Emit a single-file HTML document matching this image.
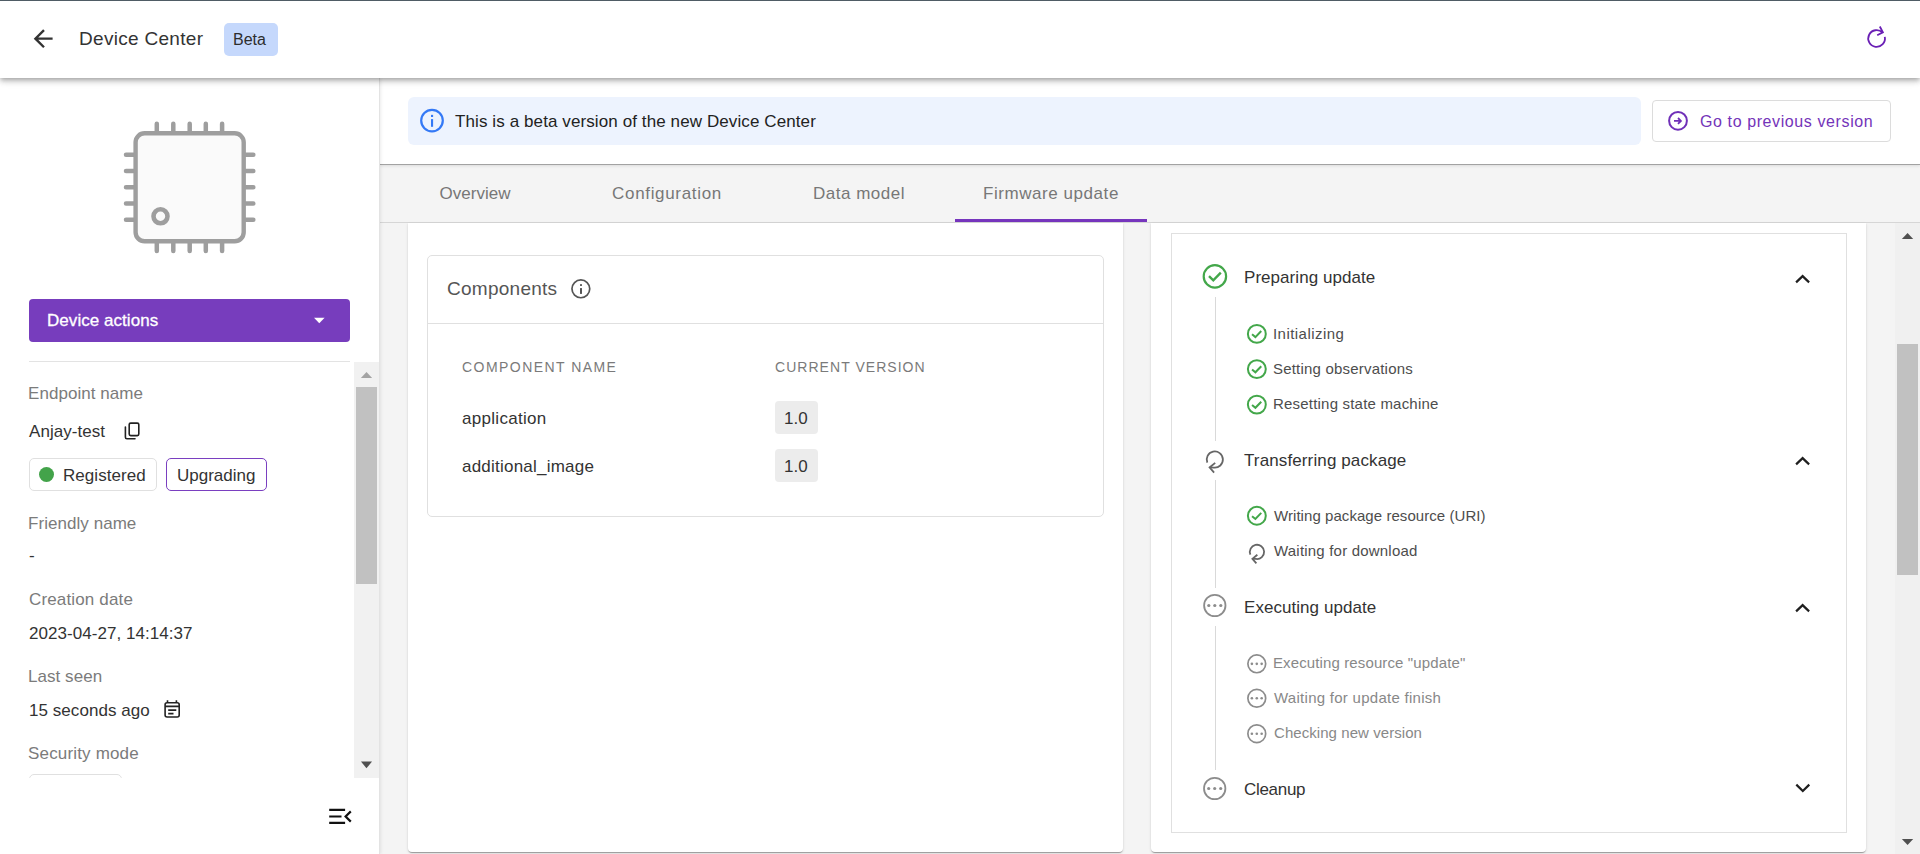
<!DOCTYPE html>
<html><head><meta charset="utf-8">
<style>
*{box-sizing:border-box;margin:0;padding:0}
html,body{width:1920px;height:854px;overflow:hidden;background:#f4f4f4;font-family:"Liberation Sans",sans-serif;color:#333}
.a{position:absolute}
.t{position:absolute;white-space:nowrap;line-height:1}
svg.a{overflow:visible}
.lbl{font-size:17px;color:#7b7b7b}
.val{font-size:17px;color:#333}
.tab{font-size:17px;color:#777;letter-spacing:0.3px}
.ttl{font-size:17px;color:#333;letter-spacing:0.05px}
.sub{font-size:15px;color:#4d4d4d;letter-spacing:0.2px}
.subp{font-size:15px;color:#888;letter-spacing:0.2px}
</style></head>
<body>

<!-- MAIN BG PIECES -->
<div class="a" style="left:380px;top:78px;width:1540px;height:87px;background:#fff;border-bottom:1px solid #a2a2a2;box-shadow:0 1px 3px rgba(0,0,0,.10)"></div>

<!-- banner -->
<div class="a" style="left:408px;top:97px;width:1233px;height:48px;background:#edf3fe;border-radius:6px"></div>
<div class="t" style="left:455px;top:113px;font-size:17px;color:#222;letter-spacing:0.1px">This is a beta version of the new Device Center</div>

<!-- go to previous -->
<div class="a" style="left:1652px;top:100px;width:239px;height:42px;background:#fff;border:1px solid #dcdcdc;border-radius:4px"></div>
<div class="t" style="left:1700px;top:114px;font-size:16px;color:#7434b9;letter-spacing:0.6px">Go to previous version</div>

<!-- tabs -->
<div class="t tab" style="left:379px;width:192px;text-align:center;top:185px;letter-spacing:0.02px">Overview</div>
<div class="t tab" style="left:571px;width:192px;text-align:center;top:185px;letter-spacing:0.67px">Configuration</div>
<div class="t tab" style="left:763px;width:192px;text-align:center;top:185px;letter-spacing:0.52px">Data model</div>
<div class="t tab" style="left:955px;width:192px;text-align:center;top:185px;letter-spacing:0.55px">Firmware update</div>
<div class="a" style="left:380px;top:222px;width:1540px;height:1px;background:#d6d6d6"></div>
<div class="a" style="left:955px;top:219px;width:192px;height:3px;background:#7635bd"></div>

<!-- left card -->
<div class="a" style="left:408px;top:223px;width:715px;height:629px;background:#fff;border-radius:0 0 4px 4px;box-shadow:0px 2px 1px -1px rgba(0,0,0,0.2),0px 1px 1px 0px rgba(0,0,0,0.14),0px 1px 3px 0px rgba(0,0,0,0.12)"></div>
<div class="a" style="left:427px;top:255px;width:677px;height:262px;border:1px solid #e0e0e0;border-radius:5px"></div>
<div class="a" style="left:428px;top:323px;width:675px;height:1px;background:#e0e0e0"></div>
<div class="t" style="left:447px;top:279px;font-size:19px;color:#555;letter-spacing:0.26px">Components</div>
<div class="t" style="left:462px;top:360px;font-size:14px;color:#7a7a7a;letter-spacing:1.45px">COMPONENT NAME</div>
<div class="t" style="left:775px;top:360px;font-size:14px;color:#7a7a7a;letter-spacing:1.04px">CURRENT VERSION</div>
<div class="t val" style="left:462px;top:410px;letter-spacing:0.3px">application</div>
<div class="t val" style="left:462px;top:458px;letter-spacing:0.22px">additional_image</div>
<div class="a" style="left:775px;top:401px;width:43px;height:33px;background:#ececec;border-radius:4px"></div>
<div class="a" style="left:775px;top:449px;width:43px;height:33px;background:#ececec;border-radius:4px"></div>
<div class="t val" style="left:784px;top:410px">1.0</div>
<div class="t val" style="left:784px;top:458px">1.0</div>

<!-- right card -->
<div class="a" style="left:1151px;top:223px;width:715px;height:629px;background:#fff;border-radius:0 0 4px 4px;box-shadow:0px 2px 1px -1px rgba(0,0,0,0.2),0px 1px 1px 0px rgba(0,0,0,0.14),0px 1px 3px 0px rgba(0,0,0,0.12)"></div>
<div class="a" style="left:1171px;top:233px;width:676px;height:600px;border:1px solid #e0e0e0"></div>
<!-- right scrollbar -->
<div class="a" style="left:1895px;top:223px;width:25px;height:631px;background:#f0f0f0"></div>
<div class="a" style="left:1897px;top:344px;width:21px;height:231px;background:#c1c1c1"></div>

<!-- timeline lines -->
<div class="a" style="left:1214.5px;top:297px;width:1px;height:144px;background:#d9d9d9"></div>
<div class="a" style="left:1214.5px;top:480px;width:1px;height:108px;background:#d9d9d9"></div>
<div class="a" style="left:1214.5px;top:626px;width:1px;height:144px;background:#d9d9d9"></div>

<!-- timeline icons: big -->

<!-- timeline titles -->
<div class="t ttl" style="left:1244px;top:269px">Preparing update</div>
<div class="t ttl" style="left:1244px;top:452px;letter-spacing:0.12px">Transferring package</div>
<div class="t ttl" style="left:1244px;top:599px">Executing update</div>
<div class="t ttl" style="left:1244px;top:781px;letter-spacing:-0.3px">Cleanup</div>

<!-- chevrons -->

<!-- sub items -->

<div class="t sub" style="left:1273px;top:326px;letter-spacing:0.45px">Initializing</div>
<div class="t sub" style="left:1273px;top:361px">Setting observations</div>
<div class="t sub" style="left:1273px;top:396px">Resetting state machine</div>
<div class="t sub" style="left:1274px;top:508px;letter-spacing:0.06px">Writing package resource (URI)</div>
<div class="t sub" style="left:1274px;top:543px">Waiting for download</div>
<div class="t subp" style="left:1273px;top:655px;letter-spacing:0.12px">Executing resource "update"</div>
<div class="t subp" style="left:1274px;top:690px;letter-spacing:0.27px">Waiting for update finish</div>
<div class="t subp" style="left:1274px;top:725px;letter-spacing:0.06px">Checking new version</div>

<!-- SIDEBAR -->
<div class="a" style="left:0;top:78px;width:380px;height:776px;background:#fff;border-right:1px solid #e3e3e3;box-shadow:1px 0 3px rgba(0,0,0,.08)"></div>
<svg class="a" style="left:115px;top:110px" width="150" height="150" viewBox="115 110 150 150">
  <g stroke="#9e9e9e" stroke-width="4.5" stroke-linecap="round" fill="none">
    <path d="M156.8 123.7V133M173.3 123.7V133M189.7 123.7V133M205.8 123.7V133M222.1 123.7V133"/>
    <path d="M156.8 241V251M173.3 241V251M189.7 241V251M205.8 241V251M222.1 241V251"/>
    <path d="M126 154.8H135M126 171.1H135M126 187.3H135M126 203.6H135M126 219.8H135"/>
    <path d="M244 154.8H253.3M244 171.1H253.3M244 187.3H253.3M244 203.6H253.3M244 219.8H253.3"/>
  </g>
  <rect x="135.6" y="133.3" width="108.1" height="108" rx="9" fill="#fafafa" stroke="#9e9e9e" stroke-width="4.4"/>
  <circle cx="160.5" cy="216.3" r="7" fill="none" stroke="#9e9e9e" stroke-width="4.6"/>
</svg>

<div class="a" style="left:29px;top:299px;width:321px;height:43px;background:#773dbd;border-radius:4px"></div>
<div class="t" style="left:47px;top:312px;font-size:17px;color:#fff;letter-spacing:0.05px;-webkit-text-stroke:0.3px #fff">Device actions</div>
<div class="a" style="left:29px;top:361px;width:321px;height:1px;background:#e3e3e3"></div>

<!-- sidebar scroll content -->
<div class="a" style="left:0;top:362px;width:379px;height:416px;overflow:hidden">
  <div class="t lbl" style="left:28px;top:23px;letter-spacing:0.05px">Endpoint name</div>
  <div class="t val" style="left:29px;top:61px;letter-spacing:0.05px">Anjay-test</div>
    <div class="a" style="left:29px;top:96px;width:128px;height:33px;border:1px solid #e0e0e0;border-radius:5px"></div>
  <div class="a" style="left:39px;top:105px;width:15px;height:15px;border-radius:50%;background:#43a34a"></div>
  <div class="t val" style="left:63px;top:105px;letter-spacing:0.05px">Registered</div>
  <div class="a" style="left:166px;top:96px;width:101px;height:33px;border:1.5px solid #7a3fc0;border-radius:5px"></div>
  <div class="t val" style="left:177px;top:105px;letter-spacing:0px">Upgrading</div>
  <div class="t lbl" style="left:28px;top:153px;letter-spacing:0.05px">Friendly name</div>
  <div class="t val" style="left:29px;top:185px">-</div>
  <div class="t lbl" style="left:29px;top:229px;letter-spacing:0.15px">Creation date</div>
  <div class="t val" style="left:29px;top:263px;letter-spacing:0.05px">2023-04-27, 14:14:37</div>
  <div class="t lbl" style="left:28px;top:306px;letter-spacing:0.05px">Last seen</div>
  <div class="t val" style="left:29px;top:340px;letter-spacing:0.05px">15 seconds ago</div>
    <div class="t lbl" style="left:28px;top:383px;letter-spacing:0.17px">Security mode</div>
  <div class="a" style="left:29px;top:412px;width:93px;height:33px;border:1px solid #e0e0e0;border-radius:5px"></div>
  <!-- scrollbar -->
  <div class="a" style="left:354px;top:0;width:25px;height:416px;background:#f1f1f1"></div>
  <div class="a" style="left:356px;top:25px;width:21px;height:197px;background:#c1c1c1"></div>
    </div>


<!-- HEADER -->
<div class="a" style="left:0;top:0;width:1920px;height:78px;background:#fff;border-top:1px solid #4f5c65;box-shadow:0px 2px 4px -1px rgba(0,0,0,0.2),0px 4px 5px 0px rgba(0,0,0,0.14),0px 1px 10px 0px rgba(0,0,0,0.12)"></div>
<div class="t" style="left:79px;top:29px;font-size:19px;letter-spacing:0.3px;color:#333">Device Center</div>
<div class="a" style="left:224px;top:23px;width:54px;height:33px;background:#c5d8fc;border-radius:5px"></div>
<div class="t" style="left:233px;top:32px;font-size:16px;color:#2d2d2d">Beta</div>

<svg class="a" style="left:0;top:0;z-index:50" width="1920" height="854" viewBox="0 0 1920 854">
<path transform="translate(29 24.5) scale(1.18)" d="M20 11H7.83l5.59-5.59L12 4l-8 8 8 8 1.41-1.41L7.83 13H20v-2z" fill="#333"/>
<path d="M1884.78 36.82A8.35 8.35 0 1 1 1882.6 32.7" fill="none" stroke="#6a1fb5" stroke-width="1.8"/>
<path d="M1879.8 26.5L1882.9 32.4 1877.2 35.3" fill="none" stroke="#6a1fb5" stroke-width="1.8" stroke-linejoin="miter"/>
<circle cx="432" cy="120.6" r="10.8" fill="none" stroke="#3479f6" stroke-width="2.2"/><rect x="431" y="114.85" width="2.1" height="2.15" fill="#3479f6"/><rect x="431" y="119.1" width="2.1" height="7.7" fill="#3479f6"/>
<circle cx="1678" cy="120.85" r="8.9" fill="none" stroke="#7030b8" stroke-width="2"/><path d="M1674 120.9H1680.2M1678 118 1680.9 120.9 1678 123.8" fill="none" stroke="#7030b8" stroke-width="1.8"/>
<circle cx="580.85" cy="288.85" r="8.9" fill="none" stroke="#555" stroke-width="1.7"/><rect x="580" y="284.2" width="2" height="1.7" fill="#555"/><rect x="580" y="288.1" width="2" height="5.8" fill="#555"/>
<rect x="129.2" y="423.1" width="9.6" height="12.5" rx="1.5" fill="none" stroke="#222" stroke-width="1.6"/><path d="M125.4 427V437.3Q125.4 438.8 126.9 438.8H135" fill="none" stroke="#222" stroke-width="1.6" stroke-linecap="round"/>
<rect x="165.1" y="702.8" width="14.1" height="14.2" rx="2" fill="none" stroke="#222" stroke-width="1.6"/><path d="M165.1 706.4H179.2M167.5 700.3V702.8M176.4 700.3V702.8M168.2 710.1H176.3M168.2 713.6H173.5" fill="none" stroke="#222" stroke-width="1.6"/>
<path d="M329.2 809.9H345.1M329.2 816.5H341.5M329.2 822.9H345.1" fill="none" stroke="#111" stroke-width="2.2"/><path d="M350.8 811.4L345.6 816.5 350.8 821.6" fill="none" stroke="#111" stroke-width="2.2"/>
<path d="M314 317.8H324.6L319.3 323.3z" fill="#fff"/>
<path d="M360.9 377.9L366.5 372 372.1 377.9z" fill="#a3a3a3"/><path d="M361 761.6H372L366.5 768.3z" fill="#505050"/>
<path d="M1901.9 238.9L1907.55 232.9 1913.2 238.9z" fill="#505050"/><path d="M1901.9 838.9H1913.2L1907.55 845z" fill="#505050"/>
<circle cx="1214.9" cy="276.4" r="11.2" fill="none" stroke="#43a74a" stroke-width="2.2"/><path d="M1209.0 276.2L1213.3 280.4 1220.8 272.7" fill="none" stroke="#43a74a" stroke-width="2.4"/>
<circle cx="1256.85" cy="333.9" r="8.95" fill="none" stroke="#43a74a" stroke-width="2"/><path d="M1252.05 334.30L1255.40 337.10 1261.25 331.00" fill="none" stroke="#43a74a" stroke-width="2"/>
<circle cx="1256.85" cy="369.1" r="8.95" fill="none" stroke="#43a74a" stroke-width="2"/><path d="M1252.05 369.50L1255.40 372.30 1261.25 366.20" fill="none" stroke="#43a74a" stroke-width="2"/>
<circle cx="1256.85" cy="404.6" r="8.95" fill="none" stroke="#43a74a" stroke-width="2"/><path d="M1252.05 405.00L1255.40 407.80 1261.25 401.70" fill="none" stroke="#43a74a" stroke-width="2"/>
<circle cx="1256.85" cy="515.8" r="8.95" fill="none" stroke="#43a74a" stroke-width="2"/><path d="M1252.05 516.20L1255.40 519.00 1261.25 512.90" fill="none" stroke="#43a74a" stroke-width="2"/>
<path d="M1207.30 462.65A8.10 8.10 0 1 1 1213.81 467.59L1209.80 467.45" fill="none" stroke="#666" stroke-width="1.8"/><path d="M1215.20 462.85L1209.60 467.45 1214.10 472.55" fill="none" stroke="#666" stroke-width="1.8"/>
<path d="M1250.40 554.63A7.13 7.13 0 1 1 1256.13 558.97L1252.60 558.85" fill="none" stroke="#666" stroke-width="1.8"/><path d="M1257.35 554.80L1252.42 558.85 1256.38 563.34" fill="none" stroke="#666" stroke-width="1.8"/>
<circle cx="1214.8" cy="605.5" r="10.7" fill="none" stroke="#8c8c8c" stroke-width="1.8"/><circle cx="1208.8" cy="605.5" r="1.6" fill="#8c8c8c"/><circle cx="1214.8" cy="605.5" r="1.6" fill="#8c8c8c"/><circle cx="1220.8" cy="605.5" r="1.6" fill="#8c8c8c"/>
<circle cx="1214.7" cy="788.5" r="10.7" fill="none" stroke="#8c8c8c" stroke-width="1.8"/><circle cx="1208.7" cy="788.5" r="1.6" fill="#8c8c8c"/><circle cx="1214.7" cy="788.5" r="1.6" fill="#8c8c8c"/><circle cx="1220.7" cy="788.5" r="1.6" fill="#8c8c8c"/>
<circle cx="1256.78" cy="663.85" r="8.9" fill="none" stroke="#8c8c8c" stroke-width="1.7"/><circle cx="1251.8799999999999" cy="663.85" r="1.3" fill="#8c8c8c"/><circle cx="1256.78" cy="663.85" r="1.3" fill="#8c8c8c"/><circle cx="1261.68" cy="663.85" r="1.3" fill="#8c8c8c"/>
<circle cx="1256.78" cy="698.3" r="8.9" fill="none" stroke="#8c8c8c" stroke-width="1.7"/><circle cx="1251.8799999999999" cy="698.3" r="1.3" fill="#8c8c8c"/><circle cx="1256.78" cy="698.3" r="1.3" fill="#8c8c8c"/><circle cx="1261.68" cy="698.3" r="1.3" fill="#8c8c8c"/>
<circle cx="1256.78" cy="733.7" r="8.9" fill="none" stroke="#8c8c8c" stroke-width="1.7"/><circle cx="1251.8799999999999" cy="733.7" r="1.3" fill="#8c8c8c"/><circle cx="1256.78" cy="733.7" r="1.3" fill="#8c8c8c"/><circle cx="1261.68" cy="733.7" r="1.3" fill="#8c8c8c"/>
<path d="M1796.1 282.4L1802.6 276.1 1809.1 282.4" fill="none" stroke="#1f1f1f" stroke-width="2.2"/>
<path d="M1796.1 464.4L1802.6 458.1 1809.1 464.4" fill="none" stroke="#1f1f1f" stroke-width="2.2"/>
<path d="M1796.1 611.4L1802.6 605.1 1809.1 611.4" fill="none" stroke="#1f1f1f" stroke-width="2.2"/>
<path d="M1796.3 784.6L1802.8 791.0 1809.3 784.6" fill="none" stroke="#1f1f1f" stroke-width="2.2"/>
</svg>
</body></html>
